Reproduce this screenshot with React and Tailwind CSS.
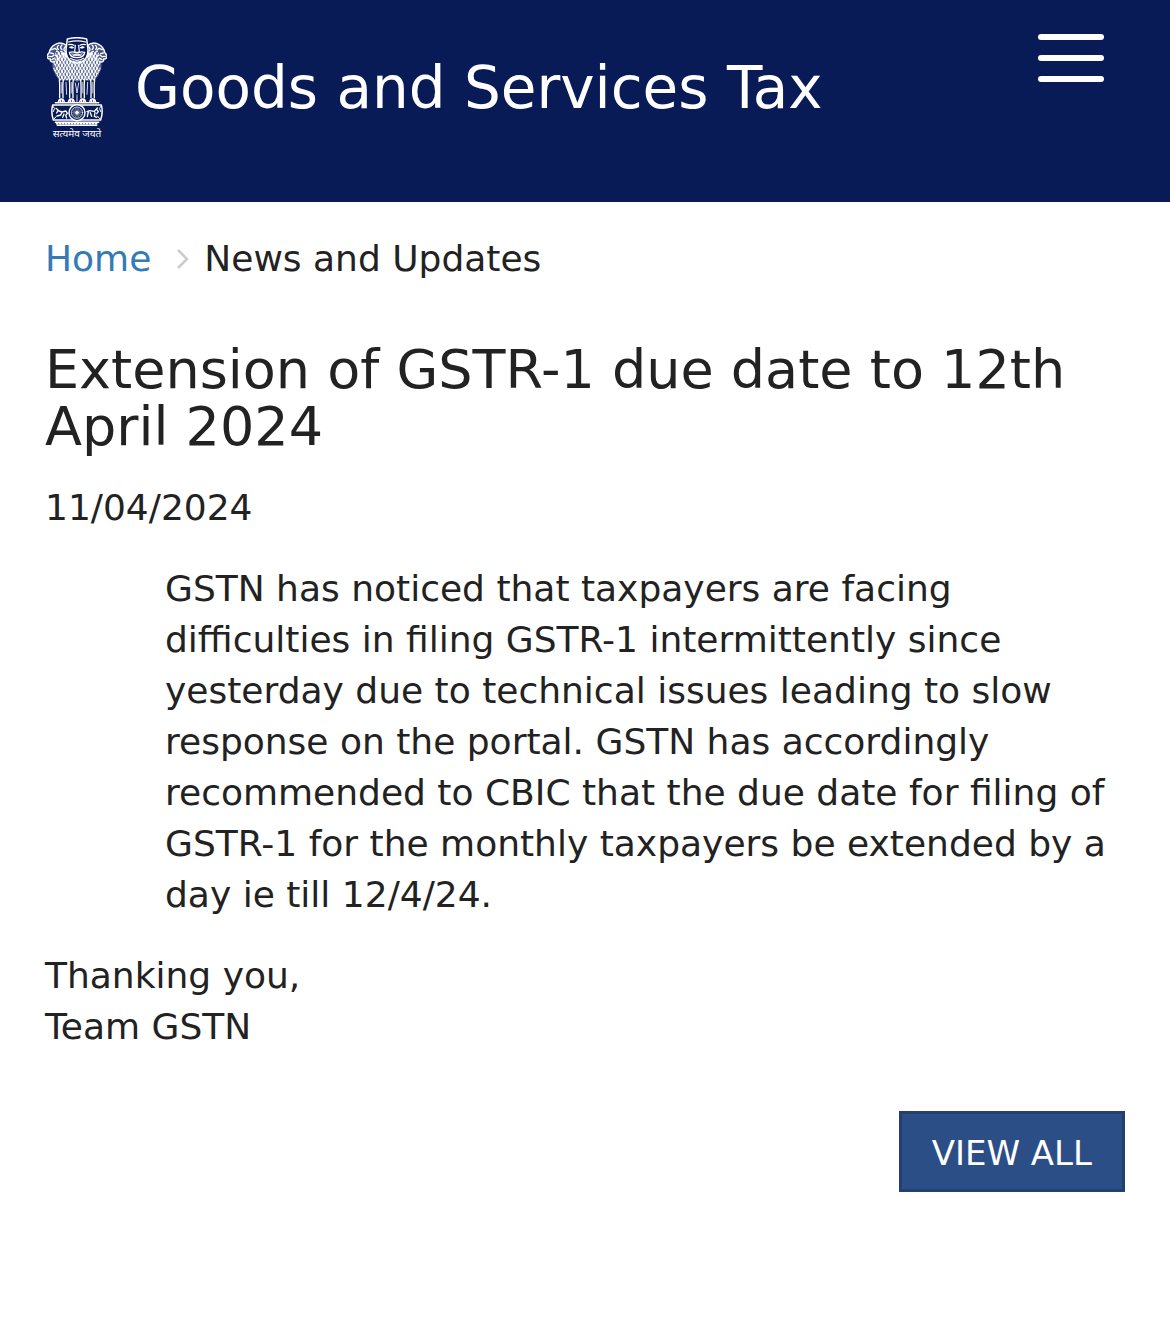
const MANE_ROWS = [
  { y: 84, half: 60 },
  { y: 93, half: 64 },
  { y: 102, half: 68 },
  { y: 111, half: 70 },
  { y: 120, half: 69 },
  { y: 129, half: 67 },
  { y: 138, half: 64 },
  { y: 147, half: 60 },
  { y: 156, half: 54 },
];

const maneLocks = MANE_ROWS.flatMap(({ y, half }, row) => {
  const locks = [];
  for (let dx = (row % 2) * 5; dx <= half; dx += 10) {
    locks.push(`M${119 + dx} ${y - 4}q1 8 4 9q4-2 4-9`);
    if (dx > 0) locks.push(`M${127 - dx} ${y - 4}q-1 8-4 9q-4-2-4-9`);
  }
  return locks;
}).join("");

const SideLion = () => (
  <g>
    <path
      d="M92 58C82 50 68 48 57 55C48 60 42 68 40 78L33 88C33 95 37 98 43 98C42 106 48 109 55 106L92 96Z"
      fill="currentColor"
      fillOpacity="0.25"
      stroke="none"
    />
    <path d="M92 58C82 50 68 48 57 55C48 60 42 68 40 78L33 88C33 95 37 98 43 98C42 106 48 109 55 106" strokeWidth="4.5" />
    <path d="M47 70l10-4 6 5M44 80l8 2M38 90l10 1 6-5M48 100l8-5" strokeWidth="4" />
    <path d="M68 57q-8 6-1 12M78 56q-8 8 0 14M88 61q-8 8-1 14M62 75q9 1 8 10M74 75q9 2 8 11M58 87q8 3 7 12M84 80q6 4 5 11" strokeWidth="4" />
  </g>
);

const Leg = ({ x }) => (
  <g>
    <path d={`M${x - 6} 160C${x - 4} 178 ${x - 5} 192 ${x - 5} 214`} strokeWidth="4" />
    <path d={`M${x + 6} 160C${x + 3} 178 ${x + 5} 192 ${x + 5} 214`} strokeWidth="4" />
    <path d={`M${x} 168v32`} strokeWidth="2" />
    <path d={`M${x - 9} 228q1-10 9-10t9 10M${x - 3} 220v8M${x + 3} 220v8`} strokeWidth="4" />
  </g>
);

const Emblem = () => (
  <svg
    viewBox="33 32 180 276"
    className="h-23 w-15"
    fill="none"
    stroke="currentColor"
    strokeLinecap="round"
    strokeLinejoin="round"
    aria-hidden="true"
  >
    {/* Side lions */}
    <SideLion />
    <g transform="translate(246 0) scale(-1 1)">
      <SideLion />
    </g>

    {/* Mane and chest */}
    <path
      d="M56 96C46 110 48 128 56 140C60 152 70 164 84 163L104 160L123 166L142 160L162 163C176 164 186 152 190 140C198 128 200 110 190 96L160 78H86Z"
      fill="currentColor"
      fillOpacity="0.35"
      stroke="none"
    />
    <path d={maneLocks} strokeWidth="3.2" />

    {/* Front face */}
    <path d="M94 38q29-8 58 0l4 32q0 26-18 36l-15 5-15-5Q90 96 90 70Z" fill="#091b56" strokeWidth="4.5" />
    <path d="M97 47q26-7 52 0M98 55q8-3 16 2M132 57q8-5 16-2" strokeWidth="3.5" />
    <path d="M101 63q6-5 12 1q-6 4-12-1M133 64q6-6 12-1q-6 5-12 1" fill="currentColor" strokeWidth="2.5" />
    <path d="M118 57l-2 18q7 6 14 0l-2-18" strokeWidth="3.5" />
    <path d="M100 78q11-3 16 0q7 4 14 0q5-3 16 0q-2 16-23 16t-23-16Z" strokeWidth="4" />
    <path d="M107 83q16 5 32 0M111 88h24" strokeWidth="3" />
    <path d="M103 96q20 12 40 0M110 104q13 7 26 0" strokeWidth="3.5" />

    {/* Legs */}
    <Leg x={76} />
    <Leg x={106} />
    <Leg x={140} />
    <Leg x={170} />
    <path d="M118 170l5 30 5-30M90 168l2 36M155 168l-2 36M123 206v20" strokeWidth="2.5" />

    {/* Abacus with wheel, horse and bull */}
    <path d="M58 229h130M50 236q-6 20 2 45h142q8-25 2-45Z" strokeWidth="4.5" />
    <circle cx="123" cy="259" r="24" fill="#091b56" strokeWidth="4.5" />
    <circle cx="123" cy="259" r="17" strokeWidth="2" />
    <circle cx="123" cy="259" r="4" fill="currentColor" strokeWidth="2" />
    <path
      d="M123 242v34M106 259h34M111 247l24 24M135 247l-24 24M116.500 243.300l13 31.400M129.500 243.300l-13 31.400M107.300 252.500l31.400 13M107.300 265.500l31.400-13"
      strokeWidth="1.300"
    />
    <path d="M60 246l9 8 9 3 12-3 4 7-5 6 3 8M66 252l-4 8M78 258l-4 8-10 3M84 263l-4 10" strokeWidth="4" />
    <path d="M153 256l8-3 14 2 9-10M182 249l5 7-5 6M157 257l-3 14M163 259l4 11M177 258l-2 12 7 3" strokeWidth="4" />
    <path d="M52 240q8 6 0 16M194 240q-8 6 0 16M55 277l7-8M191 277l-7-8" strokeWidth="3" />
    <path d="M58 288h130M64 297h118" strokeWidth="4.5" />
    <path d="M62 292h122" strokeWidth="5" strokeDasharray="3 6" />
  </svg>
);

const Header = () => (
  <header className="bg-[#091b56] text-white">
    <div className="flex items-start justify-between pt-[34px] pr-[66px] pb-[61px] pl-[47px]">
      <a href="#" className="flex items-center gap-7">
        <span className="flex flex-col items-center pt-[3px]">
          <Emblem />
          <span className="font-['Noto_Sans_Devanagari','Lohit_Devanagari',sans-serif] text-[10px] leading-3 whitespace-nowrap">
            सत्यमेव जयते
          </span>
        </span>
        <span className="text-[58px] leading-[80px]">Goods and Services Tax</span>
      </a>
      <button type="button" aria-label="Menu" className="flex w-[66px] flex-col gap-[15px]">
        <span className="h-1.5 w-full rounded-full bg-white" />
        <span className="h-1.5 w-full rounded-full bg-white" />
        <span className="h-1.5 w-full rounded-full bg-white" />
      </button>
    </div>
  </header>
);

const Breadcrumb = () => (
  <nav aria-label="Breadcrumb">
    <ol className="flex items-center">
      <li>
        <a href="#" className="text-[#337ab7]">Home</a>
      </li>
      <li className="flex items-center">
        <svg viewBox="0 0 12 20" className="mr-[15px] ml-[26px] h-5 w-3" fill="none" stroke="#cccccc" strokeWidth="2.5" aria-hidden="true">
          <path d="M1 1l9 9-9 9" />
        </svg>
        <span>News and Updates</span>
      </li>
    </ol>
  </nav>
);

const App = () => {
  return (
    <div className="min-h-screen bg-white font-[Verdana,'DejaVu_Sans',sans-serif] text-[36px] leading-[51px] text-[#222222]">
      <Header />
      <main className="px-[45px] pt-[31px] pb-[134px]">
        <Breadcrumb />
        <article>
          <h1 className="mt-[57px] text-[54px] leading-[57px]">Extension of GSTR-1 due date to 12th April 2024</h1>
          <p className="mt-[27px]">11/04/2024</p>
          <p className="mt-[30px] -mr-2 pl-[120px]">
            GSTN has noticed that taxpayers are facing difficulties in filing GSTR-1 intermittently since yesterday due
            to technical issues leading to slow response on the portal. GSTN has accordingly recommended to CBIC that
            the due date for filing of GSTR-1 for the monthly taxpayers be extended by a day ie till 12/4/24.
          </p>
          <p className="mt-[30px]">
            Thanking you,
            <br />
            Team GSTN
          </p>
        </article>
        <div className="mt-[59px] flex justify-end">
          <a href="#" className="border-3 border-[#254070] bg-[#2c4e86] px-[30px] pt-[14px] pb-[10px] text-[34px] text-white">
            VIEW ALL
          </a>
        </div>
      </main>
    </div>
  );
};

export default App;
